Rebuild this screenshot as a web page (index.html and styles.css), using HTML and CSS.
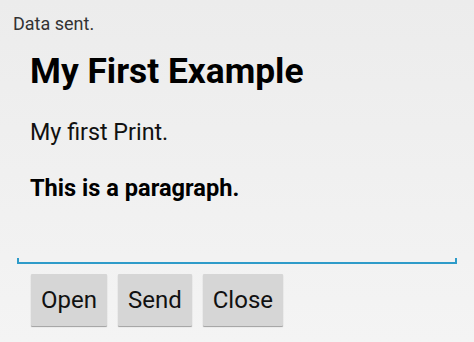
FILE: index.html
```html
<!DOCTYPE html>
<html>
<head>
<meta charset="utf-8">
<link rel="stylesheet" href="styles.css">
</head>
<body>
<div class="screen">
  <div class="toast">Data sent.</div>
  <div class="content">
    <h1 class="title">My First Example</h1>
    <p class="text">My first Print.</p>
    <p class="text bold">This is a paragraph.</p>
  </div>
  <div class="field"></div>
  <div class="buttons">
    <button class="btn">Open</button>
    <button class="btn">Send</button>
    <button class="btn">Close</button>
  </div>
</div>
</body>
</html>
```
FILE: styles.css
```css
html, body {
  margin: 0;
  padding: 0;
}
body {
  width: 474px;
  height: 342px;
  overflow: hidden;
  font-family: Roboto, "Liberation Sans", sans-serif;
  background: linear-gradient(#ececec, #f4f4f4);
}
.screen {
  display: flex;
  flex-direction: column;
}
.toast {
  padding: 12px 0 0 13px;
  font-size: 18px;
  line-height: 24px;
  color: #333;
}
.content {
  padding: 0 30px;
}
.title {
  margin: 13px 0 0;
  font-size: 35.3px;
  line-height: 44px;
  font-weight: 700;
  color: #000;
}
.text {
  margin: 25px 0 0;
  font-size: 23.3px;
  line-height: 28px;
  color: #111;
}
.text.bold {
  margin-top: 28px;
  font-size: 23.6px;
  font-weight: 700;
  color: #000;
}
.field {
  margin: 56px 17px 0;
  height: 4px;
  border: 2px solid #2e9bc9;
  border-top: none;
}
.buttons {
  display: flex;
  gap: 11px;
  margin-top: 10px;
  padding-left: 31px;
}
.btn {
  height: 52px;
  padding: 0 10px;
  border: none;
  border-radius: 1px;
  background: #d6d6d6;
  box-shadow: 0 1px 1px rgba(0, 0, 0, 0.35);
  font-family: Roboto, "Liberation Sans", sans-serif;
  font-size: 24px;
  color: #111;
}
```
